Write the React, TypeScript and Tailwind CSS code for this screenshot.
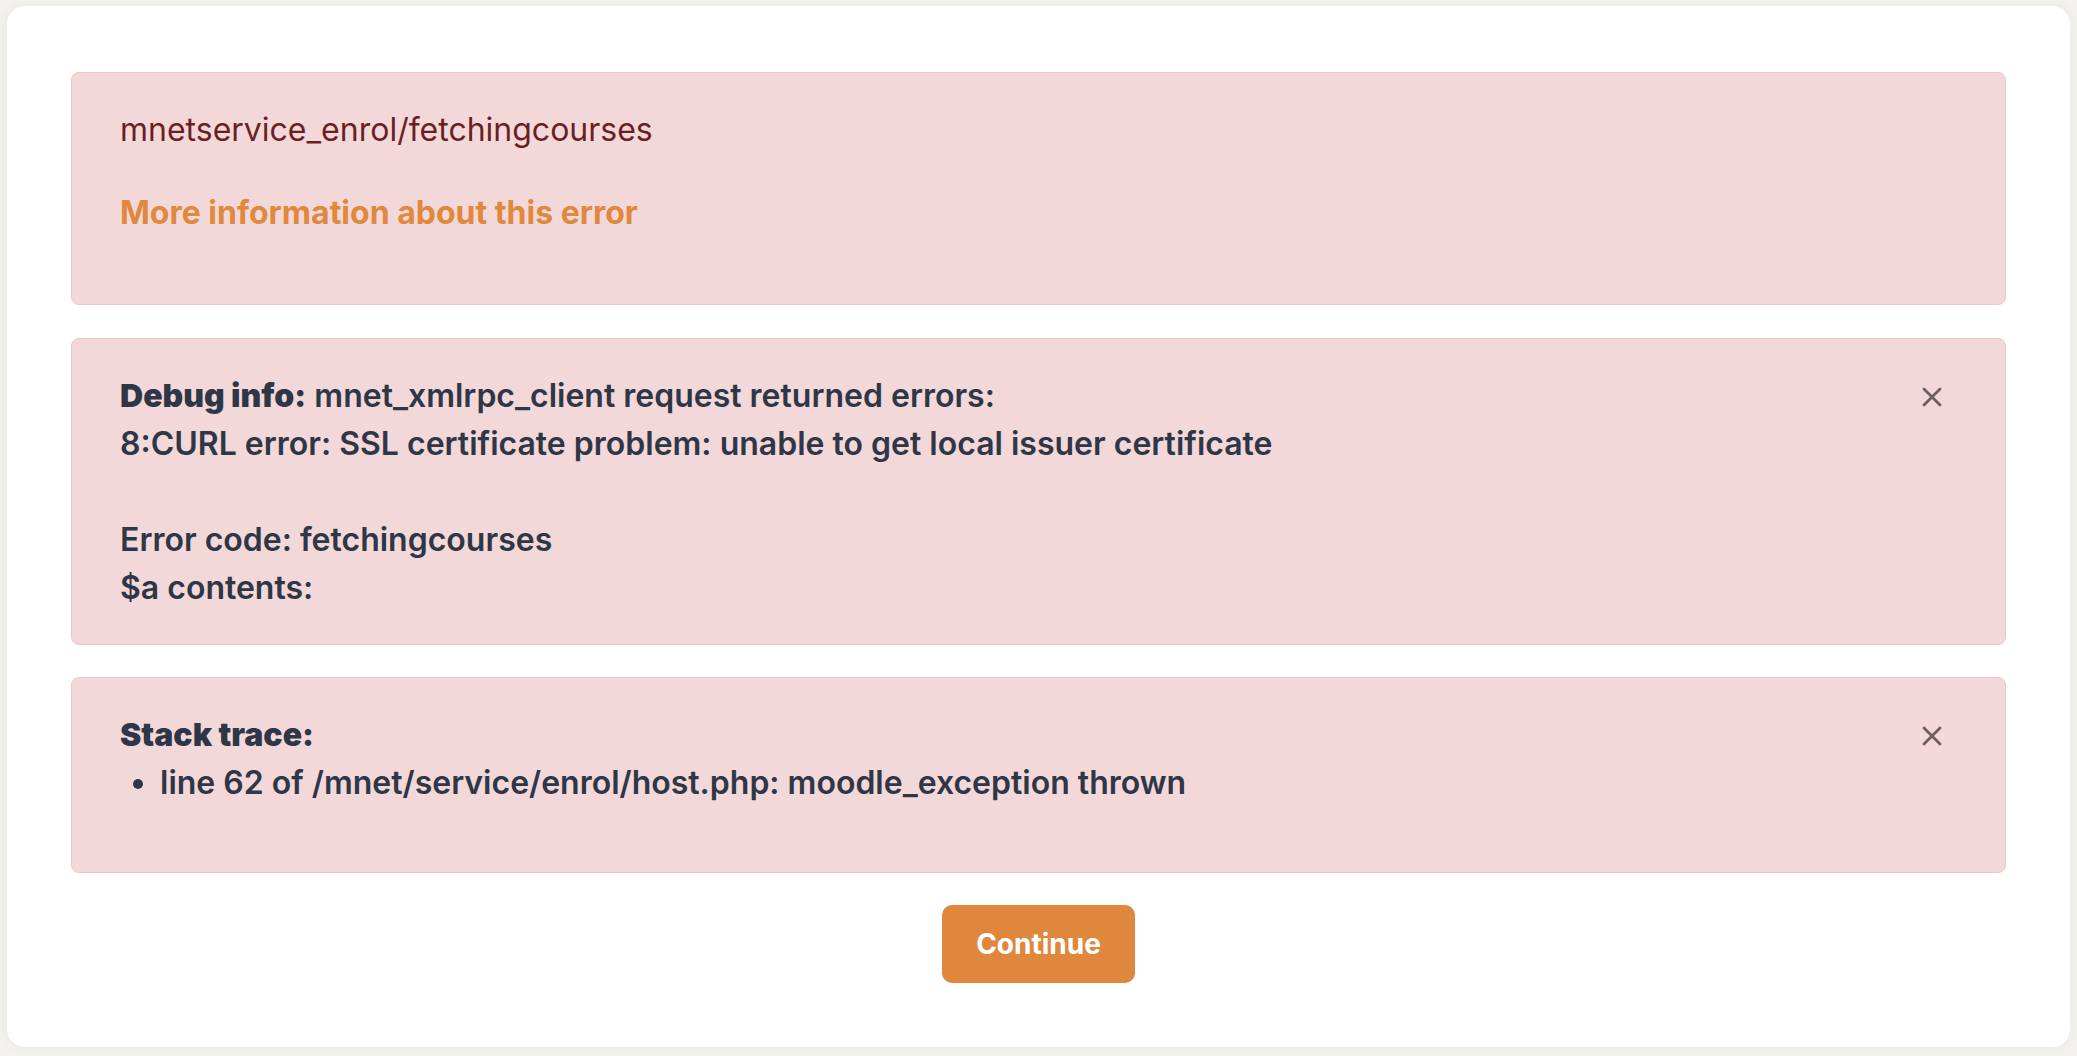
import React from "react";

function CloseIcon() {
  return (
    <svg viewBox="0 0 20 20" className="w-5 h-5" fill="none" stroke="currentColor" strokeWidth="2.8" strokeLinecap="round">
      <path d="M2 2 L18 18 M18 2 L2 18" />
    </svg>
  );
}

export default function App() {
  return (
    <div className="min-h-screen bg-[#f4f2ee] px-[7px] pt-[6px] pb-[9px] font-[Inter,sans-serif]">
      <div className="bg-white rounded-[18px] shadow-[0_0_12px_rgba(120,110,90,0.08)] px-16 pt-[66px] pb-16">
        {/* error message */}
        <div className="rounded-lg border border-[#edc6ca] bg-[#f3d8da] px-12 pt-[33px] pb-[33px] mb-[33px] text-[32px] leading-[48px]">
          <p className="text-[#6b1f25] mb-[35px]">mnetservice_enrol/fetchingcourses</p>
          <p className="mb-[34px]">
            <a href="#" className="font-bold text-[#e0883b]">More information about this error</a>
          </p>
        </div>

        {/* debug info */}
        <div className="relative rounded-lg border border-[#edc6ca] bg-[#f3d8da] px-12 pt-[33px] pb-[32px] mb-[32px] text-[32px] leading-[48px] font-semibold text-[#2f3645]">
          <button className="absolute top-[48px] right-[63px] text-[#6e5e62]">
            <CloseIcon />
          </button>
          <p>
            <span className="font-black">Debug info:</span> mnet_xmlrpc_client request returned errors:
            <br />
            8:CURL error: SSL certificate problem: unable to get local issuer certificate
            <br />
            <br />
            Error code: fetchingcourses
            <br />
            $a contents:
          </p>
        </div>

        {/* stack trace */}
        <div className="relative rounded-lg border border-[#edc6ca] bg-[#f3d8da] px-12 py-[33px] mb-8 text-[32px] leading-[48px] font-semibold text-[#2f3645]">
          <button className="absolute top-[48px] right-[63px] text-[#6e5e62]">
            <CloseIcon />
          </button>
          <p className="font-black">Stack trace:</p>
          <ul className="list-disc pl-[40px] mb-8">
            <li>line 62 of /mnet/service/enrol/host.php: moodle_exception thrown</li>
          </ul>
        </div>

        <div className="flex justify-center">
          <button className="h-[78px] px-[34px] rounded-[10px] bg-[#df873c] text-white text-[28px] font-bold">
            Continue
          </button>
        </div>
      </div>
    </div>
  );
}
